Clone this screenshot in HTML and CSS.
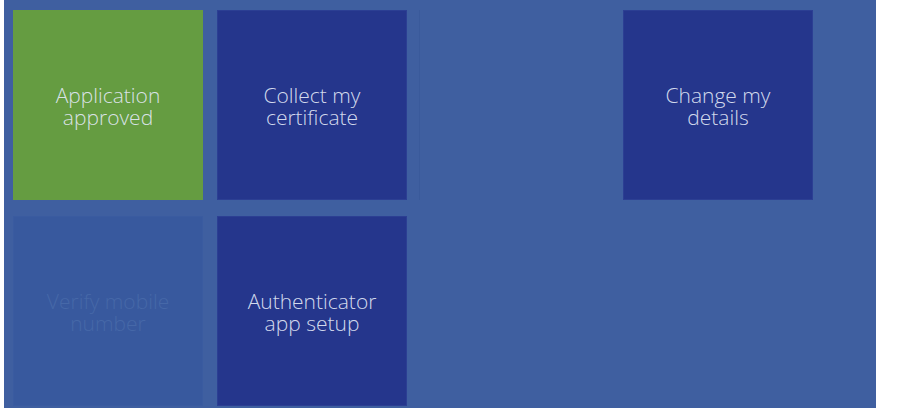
FILE: index.html
```html
<!DOCTYPE html>
<html>
<head>
<meta charset="utf-8">
<link rel="stylesheet" href="styles.css">
</head>
<body>
<div class="panel">
  <div class="grid">
    <div class="tile tile-green"><span class="label">Application<br>approved</span></div>
    <div class="tile tile-blue"><span class="label">Collect my<br>certificate</span></div>
    <div class="spacer"></div>
    <div class="tile tile-blue"><span class="label">Change my<br>details</span></div>
    <div class="tile tile-disabled"><span class="label">Verify mobile<br>number</span></div>
    <div class="tile tile-blue"><span class="label">Authenticator<br>app setup</span></div>
  </div>
</div>
</body>
</html>
```
FILE: styles.css
```css
html, body {
  margin: 0;
  padding: 0;
  background: #ffffff;
  height: 100%;
  overflow: hidden;
}
.panel {
  margin-left: 4px;
  width: 872px;
  height: 408px;
  background: #3f5fa0;
  box-sizing: border-box;
  padding: 10px 0 0 9px;
}
.grid {
  display: grid;
  grid-template-columns: 190px 188px 190px 190px;
  grid-template-rows: 190px 190px;
  column-gap: 14px;
  row-gap: 16px;
}
.tile {
  width: 190px;
  height: 190px;
  box-sizing: border-box;
  padding-top: 2px;
  display: flex;
  align-items: center;
  justify-content: center;
  text-align: center;
  font-family: "Open Sans", "Liberation Sans", sans-serif;
  font-weight: 300;
  font-size: 21px;
  line-height: 22px;
  color: rgba(228, 234, 248, 0.92);
}
.label {
  display: block;
}
.tile-green {
  background: #659c41;
}
.tile-blue {
  background: #25368c;
  border: 1px solid #2c3f93;
}
.tile-disabled {
  background: #38599e;
  border: 1px solid #3a5ba0;
  color: #4668a8;
}
.spacer {
  width: 1px;
  height: 190px;
  background: #3a5a9b;
}
```
